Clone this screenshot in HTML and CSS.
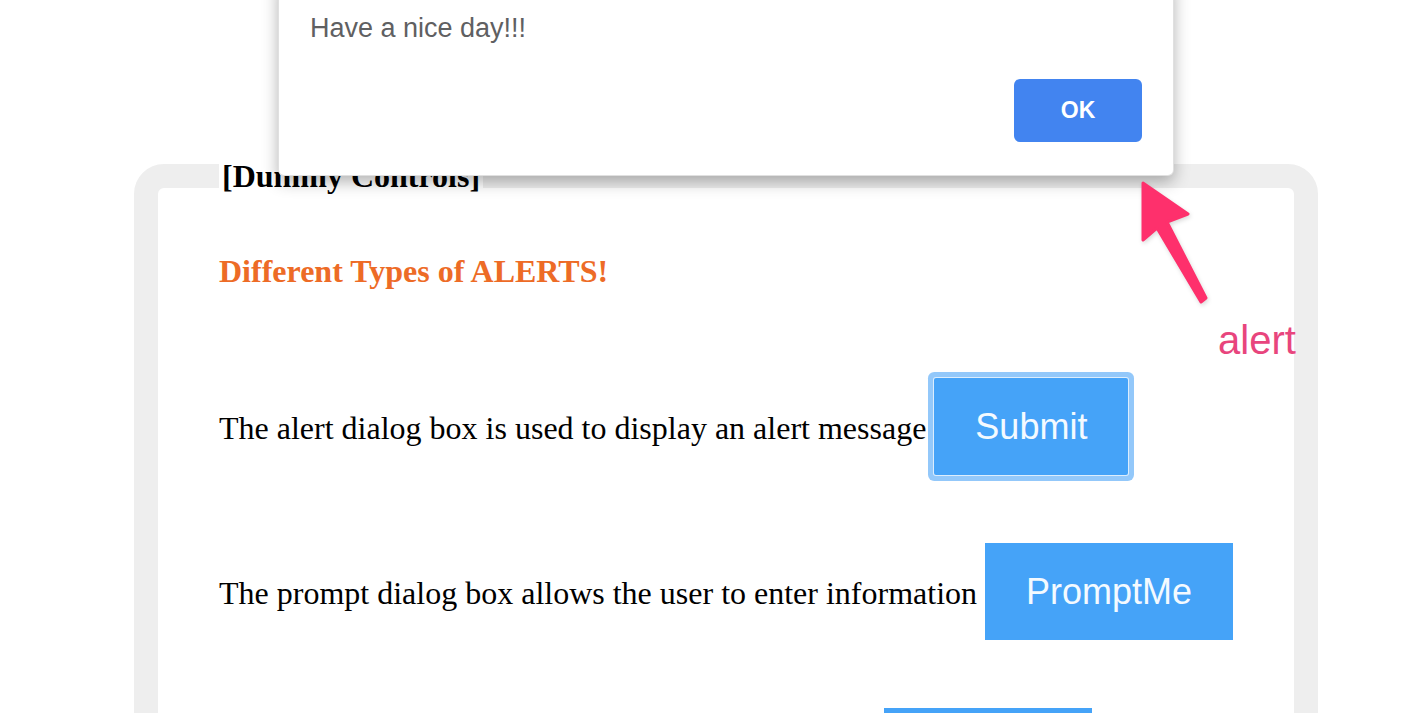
FILE: index.html
```html
<!DOCTYPE html>
<html lang="en">
<head>
    <meta charset="UTF-8">
    <meta name="viewport" content="width=device-width, initial-scale=1.0">
    <title>Alerts</title>
    <link rel="stylesheet" href="styles.css">
</head>
<body>
    <div class="page">

        <!-- browser alert dialog -->
        <div class="alert-box">
            <div class="alert-text">Have a nice day!!!</div>
            <div class="alert-actions">
                <button class="alert-ok">OK</button>
            </div>
        </div>

        <!-- annotation -->
        <svg class="arrow" width="90" height="135" viewBox="0 0 90 135">
            <polygon points="13,8 58,39 37,47 76,123 71,127 27,53 13,65" fill="#fe306c" stroke="#fe306c" stroke-width="3" stroke-linejoin="round"/>
        </svg>
        <span class="note">alert</span>

        <fieldset class="controls">
            <legend>[Dummy Controls]</legend>
            <h3 class="title">Different Types of ALERTS!</h3>

            <div class="row first">
                <span>The alert dialog box is used to display an alert message</span>
                <button class="btn focused">Submit</button>
            </div>

            <div class="row">
                <span>The prompt dialog box allows the user to enter information</span>
                <button class="btn">PromptMe</button>
            </div>

            <div class="row">
                <span>The confirm dialog box asks the user to confirm all</span>
                <button class="btn">Confirm</button>
            </div>
        </fieldset>
    </div>
</body>
</html>
```

FILE: styles.css
```css
body {
    margin: 0;
    font-family: "Liberation Serif", "Times New Roman", serif;
    background: #fff;
    overflow: hidden;
}

.page {
    position: relative;
    height: 713px;
    overflow: hidden;
    padding: 158px 108px 0 134px;
    box-sizing: border-box;
}

/* fieldset */
.controls {
    margin: 0;
    border: 24px solid #eeeeee;
    border-radius: 30px;
    padding: 0 40px 0 61px;
    min-height: 700px;
}

.controls legend {
    font-size: 32px;
    font-weight: bold;
    line-height: 36px;
    padding: 0 3px;
    color: #000;
}

.title {
    margin: 59px 0 0 0;
    font-size: 32px;
    line-height: 36px;
    color: #ed6b26;
}

.row {
    display: flex;
    align-items: baseline;
    gap: 8px;
    margin-top: 68px;
    font-size: 32px;
    color: #000;
}

.row.first {
    margin-top: 89px;
}

.btn {
    font-family: "Liberation Sans", Arial, sans-serif;
    font-size: 36px;
    line-height: 41px;
    padding: 28px 41px;
    border: none;
    border-radius: 0;
    background-color: #45a3f8;
    color: #f4faff;
    cursor: pointer;
}

.btn.focused {
    border-radius: 2px;
    box-shadow: 0 0 0 1px #dcedfd, 0 0 0 6px #93c8fa;
}

/* alert dialog */
.alert-box {
    position: absolute;
    left: 278px;
    top: -20px;
    width: 896px;
    box-sizing: border-box;
    padding: 32px 32px 33px 31px;
    background: #fff;
    border: 1px solid rgba(0, 0, 0, 0.12);
    border-radius: 6px;
    box-shadow: 0 6px 16px rgba(0, 0, 0, 0.3);
    font-family: "Liberation Sans", Arial, sans-serif;
    z-index: 2;
}

.alert-text {
    font-size: 27px;
    line-height: 30px;
    color: #5f6062;
}

.alert-actions {
    display: flex;
    justify-content: flex-end;
    margin-top: 36px;
}

.alert-ok {
    width: 128px;
    height: 63px;
    margin-right: -1px;
    border: none;
    border-radius: 6px;
    background-color: #4284f0;
    color: #fff;
    font-family: "Liberation Sans", Arial, sans-serif;
    font-size: 23px;
    font-weight: bold;
}

/* annotation */
.arrow {
    position: absolute;
    left: 1130px;
    top: 175px;
    z-index: 3;
    filter: drop-shadow(1px 2px 2px rgba(0, 0, 0, 0.15));
}

.note {
    position: absolute;
    left: 1218px;
    top: 320px;
    font-family: "Liberation Sans", Arial, sans-serif;
    font-size: 40px;
    line-height: 40px;
    color: #e8457d;
    z-index: 3;
}
```
